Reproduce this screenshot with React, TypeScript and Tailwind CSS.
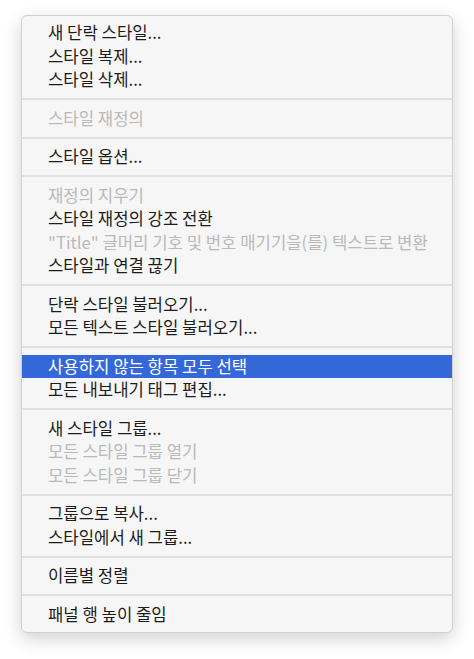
type Item = { label: string; disabled?: boolean; active?: boolean }

const groups: Item[][] = [
  [{ label: '새 단락 스타일...' }, { label: '스타일 복제...' }, { label: '스타일 삭제...' }],
  [{ label: '스타일 재정의', disabled: true }],
  [{ label: '스타일 옵션...' }],
  [
    { label: '재정의 지우기', disabled: true },
    { label: '스타일 재정의 강조 전환' },
    { label: '"Title" 글머리 기호 및 번호 매기기을(를) 텍스트로 변환', disabled: true },
    { label: '스타일과 연결 끊기' },
  ],
  [{ label: '단락 스타일 불러오기...' }, { label: '모든 텍스트 스타일 불러오기...' }],
  [{ label: '사용하지 않는 항목 모두 선택', active: true }, { label: '모든 내보내기 태그 편집...' }],
  [
    { label: '새 스타일 그룹...' },
    { label: '모든 스타일 그룹 열기', disabled: true },
    { label: '모든 스타일 그룹 닫기', disabled: true },
  ],
  [{ label: '그룹으로 복사...' }, { label: '스타일에서 새 그룹...' }],
  [{ label: '이름별 정렬' }],
  [{ label: '패널 행 높이 줄임' }],
]

function MenuRow({ item }: { item: Item }) {
  const color = item.active
    ? 'bg-[#3468d9] text-white'
    : item.disabled
      ? 'text-[#b9b9b9]'
      : 'text-[#1c1c1c]'
  return (
    <div className={`flex h-[23.5px] items-center whitespace-nowrap pl-[26px] text-[16.7px] leading-none ${color}`}>
      {item.label}
    </div>
  )
}

export default function App() {
  return (
    <div className="h-[659px] w-[474px] bg-white pt-[15px] pl-[21px]" style={{ fontFamily: '"Noto Sans CJK KR", "Noto Sans", sans-serif' }}>
      <div className="w-[432px] rounded-[6px] border border-[#d0d0d0] bg-[#f6f6f6] pt-[5px] pb-[6px] shadow-[0_6px_18px_rgba(0,0,0,0.18)]">
        {groups.map((group, gi) => (
          <div key={gi}>
            {gi > 0 && <div className="my-[6.5px] h-[2px] bg-[#e0e0e0]" />}
            {group.map((item) => (
              <MenuRow key={item.label} item={item} />
            ))}
          </div>
        ))}
      </div>
    </div>
  )
}
